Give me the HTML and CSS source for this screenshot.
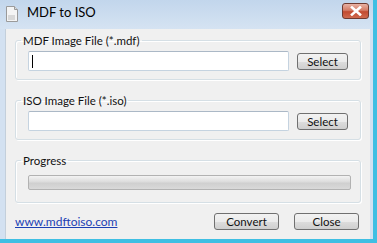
FILE: index.html
```html
<!DOCTYPE html>
<html>
<head>
<meta charset="UTF-8">
<title>MDF to ISO</title>
<link rel="stylesheet" href="styles.css">
</head>
<body>
<div class="window">
	<div class="titlebar">
		<svg class="appicon" width="14" height="16" viewBox="0 0 14 16">
			<path d="M1.5 0.5h8l3 3v12h-11z" fill="#f4f4f4" stroke="#9a9a9a"/>
			<path d="M9.5 0.5v3h3" fill="#dcdcdc" stroke="#9a9a9a"/>
			<rect x="3" y="9" width="7" height="5" fill="#d8d8d8"/>
		</svg>
		<span class="title">MDF to ISO</span>
		<div class="closebtn">
			<svg width="12" height="10" viewBox="0 0 12 10">
				<path d="M2 1.5l8 7M10 1.5l-8 7" stroke="#fff" stroke-width="2.6" stroke-linecap="square"/>
			</svg>
		</div>
	</div>
	<div class="client">
		<fieldset class="group">
			<legend>MDF Image File (*.mdf)</legend>
			<div class="row">
				<div class="textbox"><span class="caret"></span></div>
				<button class="btn select">Select</button>
			</div>
		</fieldset>
		<fieldset class="group">
			<legend>ISO Image File (*.iso)</legend>
			<div class="row">
				<div class="textbox"></div>
				<button class="btn select">Select</button>
			</div>
		</fieldset>
		<fieldset class="group last">
			<legend>Progress</legend>
			<div class="progress"></div>
		</fieldset>
		<div class="footer">
			<a class="link" href="#">www.mdftoiso.com</a>
			<button class="btn wide">Convert</button>
			<button class="btn wide">Close</button>
		</div>
	</div>
</div>
</body>
</html>
```

FILE: styles.css
```css
body{margin:0;font-family:Lato,"Noto Sans",sans-serif;font-size:11.5px;color:#000;}
.window{width:373px;height:239px;background:#d3e1f1;border-right:4px solid #3fbfe3;border-bottom:4px solid #3fbfe3;display:flex;flex-direction:column;}
.titlebar{height:29px;display:flex;align-items:flex-start;background:linear-gradient(#c2d6ec,#d5e3f2);position:relative;}
.appicon{margin:6px 0 0 5px;}
.title{margin:4px 0 0 8px;font-size:13px;}
.closebtn{position:absolute;left:342px;top:3px;width:27px;height:16px;border:1px solid #6f3a30;border-radius:3px;background:linear-gradient(#e8b2a4,#d47c66 45%,#c24a30 55%,#cf6a4f);display:flex;align-items:center;justify-content:center;box-sizing:border-box;}
.client{flex:1;margin:0 3px 0 5px;background:#f0f0f0;border-left:1px solid #c3cfdb;padding:5px 9px 0 9px;display:flex;flex-direction:column;}
.group{margin:0 0 14px 0;padding:4px 9px 8px 12px;border:1px solid #d5dfe5;border-radius:3px;box-shadow:inset 1px 1px #fff,1px 1px #fff;}
.group legend{padding:0 2px;margin-left:-7px;color:#111;}
.row{display:flex;align-items:center;}
.textbox{width:259px;height:18px;background:#fff;border:1px solid #c5d3e0;border-top-color:#abb8c6;border-radius:2px;position:relative;}
.caret{position:absolute;left:3px;top:3px;width:1px;height:13px;background:#000;}
.btn{font-family:inherit;font-size:11.5px;height:17px;padding:0;border:1px solid #707070;border-radius:3px;background:linear-gradient(#f2f2f2,#ebebeb 50%,#dddddd 51%,#cfcfcf);color:#111;}
.select{width:51px;margin-left:8px;}
.last{padding-top:8px;padding-bottom:12px;margin-bottom:10px;}
.progress{height:13px;border:1px solid #b2b2b2;border-radius:2px;background:linear-gradient(#f3f3f3,#dcdcdc 45%,#cfcfcf 55%,#d9d9d9);}
.footer{display:flex;align-items:center;}
.link{color:#1c3fb4;font-size:12px;margin-right:auto;}
.wide{width:65px;margin-left:15px;}
.wide:last-child{margin-right:2px;}
```
